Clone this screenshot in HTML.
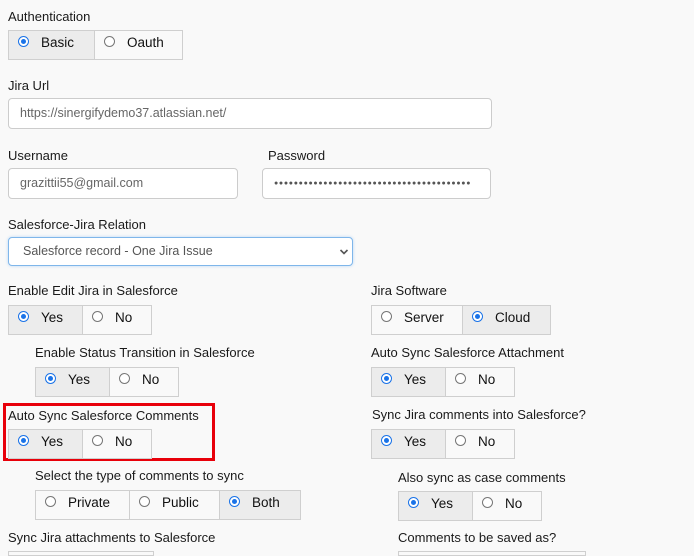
<!DOCTYPE html>
<html><head><meta charset="utf-8"><style>
body{margin:0;width:694px;height:553px;overflow:hidden;background:#f9f9f9;font-family:"Liberation Sans",Arial,sans-serif;font-size:13px;color:#222;position:relative}
.l{position:absolute;font-size:13px;color:#1a1a1a;line-height:15px;white-space:nowrap}
.g{position:absolute;display:flex;border:1px solid #cfcfcf;height:28px;box-sizing:content-box;background:#f9f9f9}
.c{position:relative;height:28px;border-right:1px solid #cfcfcf;box-sizing:border-box;font-size:13.5px;line-height:24px;padding-left:32px;color:#111}
.c:last-child{border-right:none}
.c.s{background:#ececec}
.c i{position:absolute;left:9px;top:5px;width:11px;height:11px;border:1px solid #767676;border-radius:50%;background:#fff;box-sizing:border-box}
.c.s i{border:1.5px solid #1a73e8;background:#fff}
.c.s i:after{content:"";position:absolute;left:1.5px;top:1.5px;width:5px;height:5px;border-radius:50%;background:#1a73e8}
.in{position:absolute;border:1px solid #ccc;border-radius:4px;background:#fff;box-sizing:border-box;height:31px;font-size:12.5px;color:#666;line-height:29px;padding-left:11px}
</style></head><body>
<div class="l" style="left:8px;top:9px">Authentication</div>
<div class="g" style="left:8px;top:30px"><div class="c s" style="width:86px"><i></i>Basic</div><div class="c" style="width:87px"><i></i>Oauth</div></div>

<div class="l" style="left:8px;top:78px">Jira Url</div>
<div class="in" style="left:8px;top:98px;width:484px">https://sinergifydemo37.atlassian.net/</div>

<div class="l" style="left:8px;top:148px">Username</div>
<div class="in" style="left:8px;top:168px;width:230px">grazittii55@gmail.com</div>
<div class="l" style="left:268px;top:148px">Password</div>
<div class="in" style="left:262px;top:168px;width:229px;font-size:7px;letter-spacing:0.7px;color:#555;overflow:hidden;white-space:nowrap">●●●●●●●●●●●●●●●●●●●●●●●●●●●●●●●●●●●●●●●●</div>

<div class="l" style="left:8px;top:217px">Salesforce-Jira Relation</div>
<div class="in" style="left:8px;top:237px;width:345px;height:29px;line-height:27px;border-color:#7fb6ea;box-shadow:0 0 3px #b9d8f5;padding-left:14px;color:#555">Salesforce record - One Jira Issue
<svg style="position:absolute;left:330px;top:10px" width="10" height="8" viewBox="0 0 10 8"><path d="M1.5 2l3.5 3.5L8.5 2" fill="none" stroke="#555" stroke-width="1.6"/></svg></div>

<div class="l" style="left:8px;top:283px">Enable Edit Jira in Salesforce</div>
<div class="g" style="left:8px;top:305px"><div class="c s" style="width:74px"><i></i>Yes</div><div class="c" style="width:68px"><i></i>No</div></div>

<div class="l" style="left:35px;top:345px">Enable Status Transition in Salesforce</div>
<div class="g" style="left:35px;top:367px"><div class="c s" style="width:74px"><i></i>Yes</div><div class="c" style="width:68px"><i></i>No</div></div>

<div style="position:absolute;left:3px;top:403px;width:212px;height:58px;border:3px solid #e8000a;box-sizing:border-box"></div>
<div class="l" style="left:8px;top:408px">Auto Sync Salesforce Comments</div>
<div class="g" style="left:8px;top:429px"><div class="c s" style="width:74px"><i></i>Yes</div><div class="c" style="width:68px"><i></i>No</div></div>

<div class="l" style="left:35px;top:468px">Select the type of comments to sync</div>
<div class="g" style="left:35px;top:490px"><div class="c" style="width:94px"><i></i>Private</div><div class="c" style="width:90px"><i></i>Public</div><div class="c s" style="width:80px"><i></i>Both</div></div>

<div class="l" style="left:8px;top:530px">Sync Jira attachments to Salesforce</div>
<div style="position:absolute;left:8px;top:551px;width:144px;height:3px;border:1px solid #cfcfcf"></div>

<div class="l" style="left:371px;top:283px">Jira Software</div>
<div class="g" style="left:371px;top:305px"><div class="c" style="width:91px"><i></i>Server</div><div class="c s" style="width:87px"><i></i>Cloud</div></div>

<div class="l" style="left:371px;top:345px">Auto Sync Salesforce Attachment</div>
<div class="g" style="left:371px;top:367px"><div class="c s" style="width:74px"><i></i>Yes</div><div class="c" style="width:68px"><i></i>No</div></div>

<div class="l" style="left:372px;top:407px">Sync Jira comments into Salesforce?</div>
<div class="g" style="left:371px;top:429px"><div class="c s" style="width:74px"><i></i>Yes</div><div class="c" style="width:68px"><i></i>No</div></div>

<div class="l" style="left:398px;top:470px">Also sync as case comments</div>
<div class="g" style="left:398px;top:491px"><div class="c s" style="width:74px"><i></i>Yes</div><div class="c" style="width:68px"><i></i>No</div></div>

<div class="l" style="left:398px;top:530px">Comments to be saved as?</div>
<div style="position:absolute;left:398px;top:551px;width:186px;height:3px;border:1px solid #cfcfcf"></div>
</body></html>
